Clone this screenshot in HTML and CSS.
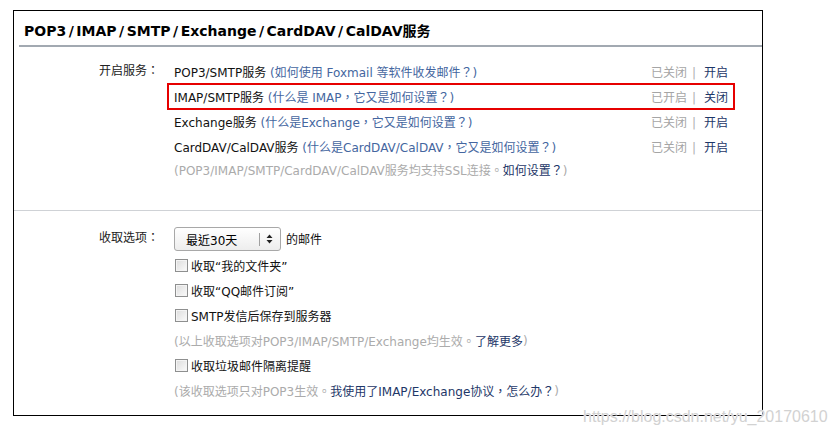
FILE: index.html
```html
<!DOCTYPE html>
<html lang="zh-CN">
<head>
<meta charset="utf-8">
<title>POP3/IMAP/SMTP/Exchange/CardDAV/CalDAV服务</title>
<link rel="stylesheet" href="styles.css">
</head>
<body>
<div class="panel">
  <div class="head">
    <h2 class="title">POP3<span class="sl">/</span>IMAP<span class="sl">/</span>SMTP<span class="sl">/</span>Exchange<span class="sl">/</span>CardDAV<span class="sl">/</span>CalDAV服务</h2>
  </div>

  <div class="section services">
    <div class="label">开启服务：</div>
    <div class="rows">
      <div class="row">
        <div class="name">POP3/SMTP服务 <span class="help">(如何使用 Foxmail 等软件收发邮件？)</span></div>
        <div class="state"><span class="st">已关闭</span><span class="sep">|</span><span class="act">开启</span></div>
      </div>
      <div class="row on">
        <div class="name">IMAP/SMTP服务 <span class="help">(什么是 IMAP，它又是如何设置？)</span></div>
        <div class="state"><span class="st">已开启</span><span class="sep">|</span><span class="act">关闭</span></div>
      </div>
      <div class="row">
        <div class="name">Exchange服务 <span class="help">(什么是Exchange，它又是如何设置？)</span></div>
        <div class="state"><span class="st">已关闭</span><span class="sep">|</span><span class="act">开启</span></div>
      </div>
      <div class="row">
        <div class="name">CardDAV/CalDAV服务 <span class="help">(什么是CardDAV/CalDAV，它又是如何设置？)</span></div>
        <div class="state"><span class="st">已关闭</span><span class="sep">|</span><span class="act">开启</span></div>
      </div>
      <div class="srv-note note">(POP3/IMAP/SMTP/CardDAV/CalDAV服务均支持SSL连接。<span class="link">如何设置？</span>)</div>
    </div>
  </div>

  <div class="divider"></div>

  <div class="section options">
    <div class="label">收取选项：</div>
    <div class="opts">
      <div class="opt first">
        <div class="select"><span class="val">最近30天</span><span class="bar"></span><svg class="arrows" width="7" height="10" viewBox="0 0 7 10"><path d="M3.5 0.5 L6.5 4 L0.5 4 Z M3.5 9.5 L6.5 6 L0.5 6 Z" fill="#222"/></svg></div>
        <span class="after">的邮件</span>
      </div>
      <div class="opt"><span class="cb"></span>收取“我的文件夹”</div>
      <div class="opt"><span class="cb"></span>收取“QQ邮件订阅”</div>
      <div class="opt"><span class="cb"></span>SMTP发信后保存到服务器</div>
      <div class="opt note">(以上收取选项对POP3/IMAP/SMTP/Exchange均生效。<span class="link">了解更多</span>)</div>
      <div class="opt"><span class="cb"></span>收取垃圾邮件隔离提醒</div>
      <div class="opt note">(该收取选项只对POP3生效。<span class="link">我使用了IMAP/Exchange协议，怎么办？</span>)</div>
    </div>
  </div>
</div>
<div class="watermark">https://blog.csdn.net/yu_20170610</div>
</body>
</html>
```

FILE: styles.css
```css
html, body {
  margin: 0;
  padding: 0;
  background: #fff;
}
body {
  font-family: "DejaVu Sans", "Noto Sans CJK TC", "Noto Sans CJK SC", sans-serif;
  font-feature-settings: "locl" 0;
  font-size: 12px;
  color: #111;
  position: relative;
  width: 835px;
  height: 436px;
  overflow: hidden;
}
.panel {
  box-sizing: border-box;
  margin: 10px 0 0 13px;
  width: 750px;
  height: 406px;
  border: 1px solid #000;
}
.head {
  margin-left: 5px;
  border-bottom: 2px solid #a2a9b1;
  padding: 11px 0 5px 5px;
}
.title {
  margin: 0;
  font-size: 14px;
  font-weight: bold;
  line-height: 18px;
  color: #000;
}
.title .sl {
  margin: 0 2.5px;
}
.section {
  display: grid;
  grid-template-columns: 145px 1fr;
}
.label {
  text-align: right;
  color: #222;
}
.services {
  padding: 12px 0 26px;
  column-gap: 8px;
}
.services .label {
  line-height: 25px;
}
.rows {
  width: 568px;
}
.row {
  box-sizing: border-box;
  height: 25px;
  border: 2px solid transparent;
  padding: 0 5px;
  display: flex;
  align-items: center;
  justify-content: space-between;
  white-space: nowrap;
}
.row.on {
  border-color: #e60000;
  height: 27px;
  margin: -1px 0;
}
.srv-note {
  height: 25px;
  line-height: 25px;
  padding-left: 7px;
  white-space: nowrap;
}
.help {
  color: #4466a0;
}
.st {
  color: #a5a5a5;
}
.sep {
  color: #b0b0b0;
  margin: 0 8px 0 5px;
}
.act {
  color: #1e3768;
}
.note {
  color: #ababab;
}
.link {
  color: #1e3768;
}
.divider {
  height: 1px;
  background: #cfd2d6;
}
.options {
  padding-top: 13px;
  column-gap: 15px;
}
.options .label {
  line-height: 29px;
}
.opt {
  height: 25px;
  display: flex;
  align-items: center;
  white-space: nowrap;
}
.opt.first {
  height: 29px;
}
.select {
  box-sizing: border-box;
  width: 107px;
  height: 24px;
  border: 1px solid #a8a8a8;
  border-radius: 3px;
  background: linear-gradient(#ffffff, #ededed);
  display: flex;
  align-items: center;
  padding-left: 11px;
  margin-top: 1px;
}
.select .val {
  width: 73px;
  color: #000;
}
.select .bar {
  width: 1px;
  height: 13px;
  background: #a0a0a0;
  margin-right: 6px;
}
.after {
  margin-left: 5px;
}
.cb {
  box-sizing: border-box;
  width: 13px;
  height: 13px;
  margin: 0 3px 0 1px;
  border: 1px solid #8e8f8f;
  background: linear-gradient(135deg, #dcdcdc, #fbfbfb);
  box-shadow: inset 0 0 0 1px #f4f4f4;
}
.watermark {
  position: absolute;
  left: 583px;
  top: 408px;
  font-family: "Liberation Sans", Arial, sans-serif;
  font-size: 16px;
  line-height: 18px;
  color: #d2d2d2;
  text-shadow: 0 0 1px #fff, 0 0 1px #fff;
  white-space: nowrap;
}
```
